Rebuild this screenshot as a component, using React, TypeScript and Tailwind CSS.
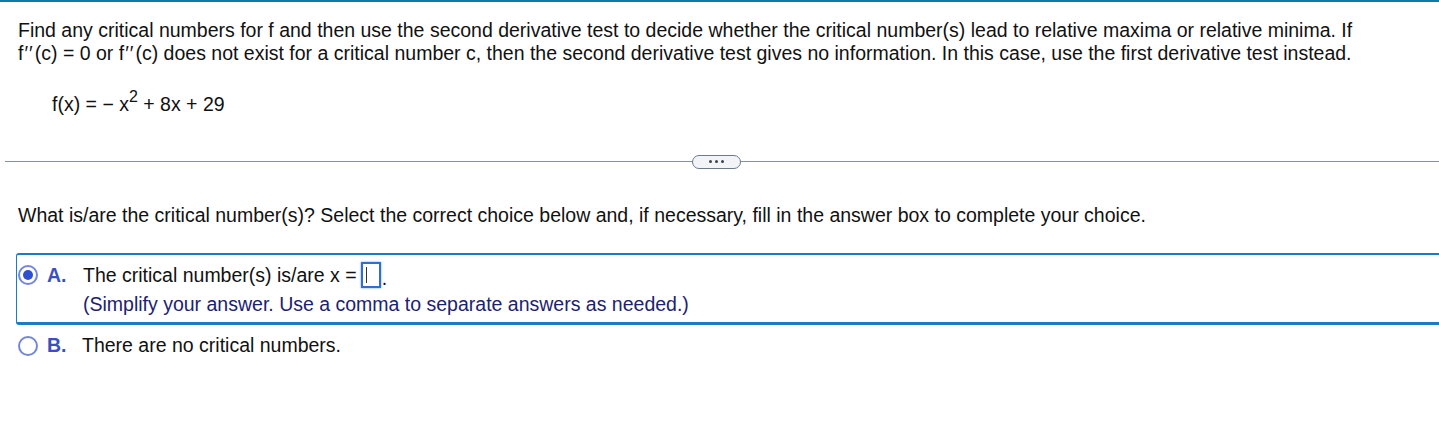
import React from "react";

const font = { fontFamily: '"Liberation Sans", Arial, sans-serif' };

function Radio({ checked }: { checked?: boolean }) {
  return (
    <span className="relative flex h-[20px] w-[20px] shrink-0 items-center justify-center rounded-full border-2 border-[#7486d8] bg-white">
      {checked && <span className="h-[10px] w-[10px] rounded-full bg-[#2f4fd1]" />}
    </span>
  );
}

function Fpp() {
  return (
    <>
      f<span className="ml-[1px]">′</span><span className="ml-[1px] mr-[2px]">′</span>
    </>
  );
}

export default function App() {
  return (
    <div className="min-h-[440px] w-[1439px] bg-white text-[19.5px] leading-[23px] text-[#111]" style={font}>
      <div className="h-[2px] w-full bg-[#0b7aa6]" />
      <div className="px-[18px] pt-[17px]">
        <p>
          Find any critical numbers for f and then use the second derivative test to decide whether the critical number(s) lead to relative maxima or relative minima. If
          <br />
          <Fpp />(c) = 0 or <Fpp />(c) does not exist for a critical number c, then the second derivative test gives no information. In this case, use the first derivative test instead.
        </p>
        <div className="mt-[28px] pl-[34px]">
          f(x) = − x<span className="relative top-[-9px] text-[16px]">2</span> + 8x + 29
        </div>
      </div>

      <div className="relative mt-[44px] flex items-center pl-[5px]">
        <div className="h-[1px] flex-1 bg-[#8591a3]" />
        <div className="absolute left-[692px] top-1/2 flex h-[14px] w-[49px] -translate-y-1/2 items-center justify-center gap-[3px] rounded-full border border-[#6c7a8c] bg-[#f2f4f7]">
          <span className="h-[3px] w-[3px] rounded-full bg-[#3a4450]" />
          <span className="h-[3px] w-[3px] rounded-full bg-[#3a4450]" />
          <span className="h-[3px] w-[3px] rounded-full bg-[#3a4450]" />
        </div>
      </div>

      <p className="mt-[42px] px-[18px]">
        What is/are the critical number(s)? Select the correct choice below and, if necessary, fill in the answer box to complete your choice.
      </p>

      <div className="mt-[26px] ml-[16px] rounded-l-[3px] border-t-2 border-b-[3px] border-l border-[#1a7cc9] pb-[6px] pt-[7px]">
        <div className="flex h-[26px] items-center">
          <div className="flex w-[66px] items-center pl-[1px]">
            <Radio checked />
            <span className="ml-[9px] font-bold text-[#3b4fc4]">A.</span>
          </div>
          <span>The critical number(s) is/are x =</span>
          <span className="relative ml-[4px] inline-block h-[26px] w-[20px] border-2 border-[#2f6fd0] shadow-[0_0_2px_#6aa0e8]">
            <span className="absolute left-[3px] top-[3px] h-[16px] w-[1px] bg-[#333]" />
          </span>
          <span className="ml-[1px] self-end leading-[20px]">.</span>
        </div>
        <div className="mt-[5px] pl-[66px] text-[#1c2270]">
          (Simplify your answer. Use a comma to separate answers as needed.)
        </div>
      </div>

      <div className="mt-[9px] flex items-center pl-[18px]">
        <div className="flex w-[64px] items-center">
          <Radio />
          <span className="ml-[9px] font-bold text-[#3b4fc4]">B.</span>
        </div>
        <span>There are no critical numbers.</span>
      </div>
    </div>
  );
}
